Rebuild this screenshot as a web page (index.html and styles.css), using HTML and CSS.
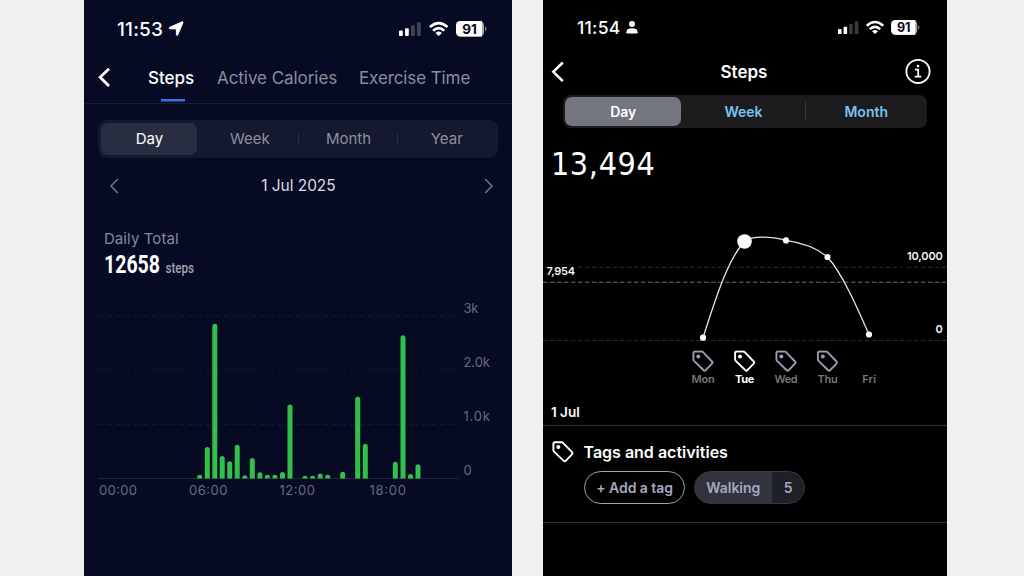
FILE: index.html
```
<!DOCTYPE html>
<html lang="en">
<head>
<meta charset="utf-8">
<title>Steps comparison</title>
<link rel="stylesheet" href="styles.css">
</head>
<body>
<svg class="defs" width="0" height="0">
  <symbol id="status" viewBox="0 0 88 18">
    <rect x="0" y="9.6" width="3.8" height="5.4" rx="1" fill="#fff"/>
    <rect x="6" y="7.2" width="3.8" height="7.8" rx="1" fill="#fff"/>
    <rect x="12" y="4.2" width="3.8" height="10.8" rx="1" fill="#fff" opacity=".23"/>
    <rect x="18" y="1.2" width="3.8" height="13.8" rx="1" fill="#fff" opacity=".23"/>
    <g fill="none" stroke="#fff" stroke-width="2.7">
      <path d="M30.9 6.1Q39.7-2 48.5 6.1"/>
      <path d="M34.1 9.7Q39.7 4.7 45.3 9.7"/>
    </g>
    <path d="M36.5 12Q39.7 9.2 42.9 12L39.7 15Z" fill="#fff"/>
    <rect x="57" y="0" width="28" height="15.6" rx="4.6" fill="#a6a8ad"/>
    <path d="M61.6 0H83V15.6H61.6A4.6 4.6 0 0 1 57 11V4.6A4.6 4.6 0 0 1 61.6 0Z" fill="#fff"/>
    <path d="M86 5.2Q89 7.8 86 10.4Z" fill="#85878d"/>
    <text class="battery" x="70.5" y="12.9" text-anchor="middle">91</text>
  </symbol>
  <symbol id="tag" viewBox="0 0 22 22">
    <path d="M1.4 2.7Q1.4 1.2 2.9 1.2H9.6Q10.4 1.2 11 1.8L20 11.2Q21 12.3 20 13.3L13.7 19.9Q12.7 20.8 11.7 19.9L2 10.6Q1.4 10 1.4 9.2Z" fill="none" stroke="currentColor" stroke-width="1.9" stroke-linejoin="round"/>
    <circle cx="6.3" cy="6.1" r="2" fill="currentColor"/>
  </symbol>
</svg>

<main class="stage">
  <section class="phone navy">
    <header class="status">
      <span class="time">11:53</span>
      <svg class="arrow" width="16" height="16" viewBox="0 0 16 16"><path d="M14.2.8Q15.4.4 14.9 1.8L9.8 13.8Q8.9 15.4 8.4 13.7V8.8Q8.2 7.8 7.2 7.8H2Q.3 7.3 1.7 6.3Z" fill="#fff" stroke="#fff" stroke-width="1"/></svg>
      <svg class="icons" width="88" height="18"><use href="#status"/></svg>
    </header>
    <nav class="tabs">
      <svg class="back" width="13" height="21" viewBox="0 0 13 21"><path d="M11 1.7 2.2 10.3 11 18.9" fill="none" stroke="#fff" stroke-width="2.8"/></svg>
      <span class="tab current">Steps</span>
      <span class="tab calories">Active Calories</span>
      <span class="tab exercise">Exercise Time</span>
    </nav>
    <div class="segments">
      <span class="segment chosen">Day</span>
      <span class="segment week">Week</span>
      <span class="segment ruled">Month</span>
      <span class="segment ruled">Year</span>
    </div>
    <div class="date-row">
      <svg width="9" height="16" viewBox="0 0 9 16"><path d="M7.8 1 1 8 7.8 15" fill="none" stroke="#777986" stroke-width="1.5"/></svg>
      <span>1 Jul 2025</span>
      <svg width="9" height="16" viewBox="0 0 9 16"><path d="M1.2 1 8 8 1.2 15" fill="none" stroke="#777986" stroke-width="1.5"/></svg>
    </div>
    <div class="total-label">Daily Total</div>
    <svg class="total" width="120" height="30" viewBox="104 250 120 30">
      <text class="total-number" x="104" y="273" textLength="56" lengthAdjust="spacingAndGlyphs">12658</text>
      <text class="total-unit" x="165.5" y="273" textLength="28.5" lengthAdjust="spacingAndGlyphs">steps</text>
    </svg>
    <svg class="bar-chart" width="428" height="216" viewBox="84 290 428 216">
      <path class="grid" d="M98 315.7H459M98 370H459M98 424.4H459"/>
      <path class="axis" d="M98 478.4H459"/>
      <path class="bars" d="M197.2 478.4V476.8q0-2 2.5-2t2.5 2V478.4ZM204.8 478.4V449.5q0-2.5 2.5-2.5t2.5 2.5V478.4ZM212.3 478.4V326.2q0-2.5 2.5-2.5t2.5 2.5V478.4ZM219.7 478.4V458.5q0-2.5 2.5-2.5t2.5 2.5V478.4ZM227.2 478.4V463.8q0-2.5 2.5-2.5t2.5 2.5V478.4ZM234.7 478.4V447.2q0-2.5 2.5-2.5t2.5 2.5V478.4ZM242.3 478.4V477.3q0-2 2.5-2t2.5 2V478.4ZM249.8 478.4V460.4q0-2.5 2.5-2.5t2.5 2.5V478.4ZM257.4 478.4V474.7q0-2.5 2.5-2.5t2.5 2.5V478.4ZM264.9 478.4V476.7q0-2 2.5-2t2.5 2V478.4ZM272.4 478.4V476.7q0-2 2.5-2t2.5 2V478.4ZM280 478.4V474.5q0-2.5 2.5-2.5t2.5 2.5V478.4ZM287.5 478.4V407q0-2.5 2.5-2.5t2.5 2.5V478.4ZM302.5 478.4V477.8q0-2 2.5-2t2.5 2V478.4ZM310 478.4V477.8q0-2 2.5-2t2.5 2V478.4ZM317.7 478.4V476q0-2.5 2.5-2.5t2.5 2.5V478.4ZM325.2 478.4V476.8q0-2 2.5-2t2.5 2V478.4ZM340.2 478.4V474.3q0-2.5 2.5-2.5t2.5 2.5V478.4ZM355.2 478.4V399.3q0-2.5 2.5-2.5t2.5 2.5V478.4ZM362.8 478.4V446.2q0-2.5 2.5-2.5t2.5 2.5V478.4ZM392.8 478.4V464.3q0-2.5 2.5-2.5t2.5 2.5V478.4ZM400.5 478.4V337.7q0-2.5 2.5-2.5t2.5 2.5V478.4ZM408 478.4V476q0-2 2.5-2t2.5 2V478.4ZM415.5 478.4V466.8q0-2.5 2.5-2.5t2.5 2.5V478.4Z"/>
      <g class="axis-text">
        <text x="463.5" y="312.6" textLength="15">3k</text>
        <text x="463.5" y="366.9" textLength="26.5">2.0k</text>
        <text x="463.5" y="421.2" textLength="26.5">1.0k</text>
        <text x="463.5" y="475.4">0</text>
        <text x="99" y="495.3" textLength="38">00:00</text>
        <text x="189" y="495.3" textLength="38.5">06:00</text>
        <text x="279.5" y="495.3" textLength="35.5">12:00</text>
        <text x="369.5" y="495.3" textLength="36.5">18:00</text>
      </g>
    </svg>
  </section>

  <section class="phone black">
    <header class="status">
      <span class="time">11:54</span>
      <svg class="person" width="12" height="13" viewBox="0 0 12 13"><circle cx="6" cy="3" r="3" fill="#fff"/><path d="M.3 11.2Q.3 7.2 6 7.2T11.7 11.2Q11.7 12.4 10.5 12.4H1.5Q.3 12.4.3 11.2Z" fill="#fff"/></svg>
      <svg class="icons" width="82" height="17"><use href="#status"/></svg>
    </header>
    <div class="title-bar">
      <svg width="14" height="22" viewBox="0 0 14 22"><path d="M11.8 1.5 2.3 10.8 11.8 20.1" fill="none" stroke="#fff" stroke-width="2.5"/></svg>
      <h1>Steps</h1>
      <svg width="26" height="26" viewBox="0 0 26 26"><circle cx="13" cy="12.4" r="11.6" fill="none" stroke="#fff" stroke-width="1.8"/><circle cx="13" cy="7.1" r="1.3" fill="#fff"/><path d="M10 10.7H13.2V17.5M9.7 17.7H16.3" fill="none" stroke="#fff" stroke-width="1.8"/></svg>
    </div>
    <div class="segments">
      <span class="segment chosen">Day</span>
      <span class="segment week">Week</span>
      <span class="segment ruled">Month</span>
    </div>
    <svg class="count" width="404" height="60" viewBox="0 0 404 60">
      <text x="8.8" y="35.3" textLength="115.5" transform="scale(.9 1)">13,494</text>
    </svg>
    <svg class="line-chart" width="404" height="200" viewBox="543 200 404 200">
      <path class="dash" d="M543 267.2H902M907 267.2H946M543 340.5H946"/>
      <path class="dash average" d="M543 282.2H946"/>
      <rect x="543" y="264" width="34" height="16" fill="#000"/>
      <path class="curve" d="M703 337.7C714 304 727 260 744.5 241.5C753 235 772 237 786 240.3C801 242.5 817 248 827.5 257C842 273 857 307 869 334.5"/>
      <g fill="#fff"><circle cx="703" cy="337.7" r="3.1"/><circle cx="744.5" cy="241.5" r="7.3"/><circle cx="786" cy="240.4" r="3.1"/><circle cx="827.5" cy="257" r="3.1"/><circle cx="869" cy="334.5" r="3.1"/></g>
      <g class="scale">
        <text x="546.5" y="275.4" textLength="28.5">7,954</text>
        <text x="907" y="260" textLength="35.8">10,000</text>
        <text x="935.5" y="333.4">0</text>
      </g>
      <g color="#9c9db3">
        <use href="#tag" x="692" y="350.3" width="22" height="22"/>
        <use href="#tag" x="775" y="350.3" width="22" height="22"/>
        <use href="#tag" x="816.5" y="350.3" width="22" height="22"/>
      </g>
      <use href="#tag" x="733.7" y="350.3" width="22" height="22" color="#fff"/>
      <g class="days">
        <text x="691.5" y="383.3" textLength="23.2">Mon</text>
        <text class="today" x="735" y="383.3" textLength="19.2">Tue</text>
        <text x="774.5" y="383.3" textLength="23.2">Wed</text>
        <text x="817.5" y="383.3" textLength="20.2">Thu</text>
        <text x="862.3" y="383.3" textLength="13.8">Fri</text>
      </g>
    </svg>
    <div class="day-heading">1 Jul</div>
    <div class="activities">
      <svg width="22" height="22"><use href="#tag"/></svg>
      <div class="activity-body">
        <h2>Tags and activities</h2>
        <div class="pills">
          <span class="pill add">+ Add a tag</span>
          <span class="pill walking"><span class="name">Walking</span><span class="number">5</span></span>
        </div>
      </div>
    </div>
  </section>
</main>
</body>
</html>
```
FILE: styles.css
```
* { box-sizing: border-box; }
body { margin: 0; background: #edf0ef; font-family: Inter, "Liberation Sans", sans-serif; color: #fff; }
.defs { display: block; }
svg { display: block; flex: none; }
h1, h2 { margin: 0; }
.stage { display: flex; gap: 31px; padding-left: 84.4px; height: 576px; overflow: hidden; white-space: nowrap; }
.phone { display: flex; flex-direction: column; flex: none; height: 576px; }
.navy { width: 427.6px; background: #060b23; }
.black { width: 404px; background: #000; }
.battery { font: 700 13.5px Inter, sans-serif; fill: #080b1c; }

.status { display: flex; align-items: center; }
.status .icons { margin-left: auto; }
.navy .status { height: 58px; padding: 0 25px 0 32.6px; }
.navy .time { font-size: 19px; font-weight: 500; letter-spacing: .2px; }
.navy .arrow { margin-left: 5px; }
.navy .icons { margin-top: 1px; }
.black .status { height: 54px; padding: 0 26.5px 0 34px; }
.black .time { font-size: 17.5px; font-weight: 500; letter-spacing: .3px; }
.black .person { margin-left: 5px; }
.black .icons { margin-top: 2px; }

.tabs { display: flex; align-items: center; height: 46px; padding-left: 13.6px; border-bottom: 1px solid #181c34; font-size: 17px; color: #8b8d9d; }
.tabs .back { margin-bottom: 7px; }
.tab { display: flex; height: 45px; padding-top: 9.5px; }
.tab.current { margin-left: 37px; width: 47px; color: #fff; font-weight: 500; background: linear-gradient(#3f6fe0, #3f6fe0) 13px 41px / 24px 2.5px no-repeat; }
.tab.calories { margin-left: 22px; width: 120px; letter-spacing: -.05px; }
.tab.exercise { margin-left: 22px; letter-spacing: -.1px; }

.segments { display: flex; }
.segment { flex: 1; display: flex; align-items: center; justify-content: center; }
.navy .segments { margin: 15.5px 14px 0; height: 38px; padding: 3px; border-radius: 9px; background: #15192f; color: #8e909e; font-size: 15px; }
.navy .segment { border-radius: 7px; }
.navy .chosen { background: #292d42; color: #fff; flex: 0 0 96px; margin-right: 2px; }
.navy .week { flex: 0 0 99px; padding-left: 2px; }
.navy .ruled { background: linear-gradient(#2b2e43, #2b2e43) 0 50% / 1px 12px no-repeat; padding-left: 2px; }
.date-row { display: flex; justify-content: space-between; align-items: center; height: 56px; padding: 0 19px 0 25.5px; font-size: 15.5px; letter-spacing: -.05px; color: #dcdde4; }
.date-row span { padding-right: 6px; }
.total-label { height: 36px; padding: 15px 0 0 19.5px; font-size: 15px; line-height: 20px; letter-spacing: .1px; color: #85889a; }
.total { margin-left: 19.5px; }
.total-number { font: 700 26.5px Roboto, sans-serif; fill: #fff; }
.total-unit { font: 500 14.5px Roboto, sans-serif; fill: #a0a2b0; }
.bar-chart { margin-top: 10px; }
.grid { stroke: #151a30; stroke-dasharray: 5 4; }
.axis { stroke: #23283f; }
.bars { fill: #32c04b; }
.axis-text { font: 400 13px Inter, sans-serif; fill: #696c7c; }

.title-bar { display: flex; align-items: center; justify-content: space-between; height: 35px; padding: 0 16px 0 8px; }
.title-bar h1 { padding-left: 18px; font-size: 17px; font-weight: 600; letter-spacing: 0; }
.black .segments { margin: 5.5px 20px 0; height: 33px; padding: 2px; border-radius: 8px; background: #1c1c1f; color: #77c4ef; font-size: 14px; font-weight: 600; }
.black .chosen { flex: 0 0 116.5px; border-radius: 7px; background: #74767f; color: #fff; }
.black .week { flex: 0 0 124px; }
.black .ruled { background: linear-gradient(#39393d, #39393d) 0 50% / 1px 19px no-repeat; padding-left: 2px; }
.count { margin-top: 12.5px; }
.count text { font: 400 32px "DejaVu Sans", sans-serif; fill: #fff; }
.dash { fill: none; stroke: #2c2c2c; stroke-dasharray: 4.5 2.5; }
.average { stroke: #6c6c6c; }
.curve { fill: none; stroke: #e6e6e6; stroke-width: 1.3; }
.scale { font: 600 11px Inter, sans-serif; fill: #f4f4f4; }
.days { font: 600 11px Inter, sans-serif; fill: #777; }
.today { fill: #fff; font-weight: 700; }
.day-heading { height: 25.5px; padding: 3px 0 0 8px; border-bottom: 1px solid #303030; font-size: 13.5px; line-height: 18px; font-weight: 600; }
.activities { display: flex; gap: 9.5px; height: 97px; padding: 15.5px 0 0 9px; border-bottom: 1px solid #303030; }
.activity-body h2 { font-size: 16px; line-height: 22px; font-weight: 600; }
.pills { display: flex; gap: 8.5px; margin: 7.5px 0 0 .5px; }
.pill { display: flex; align-items: center; justify-content: center; height: 33.5px; border-radius: 17px; overflow: hidden; color: #a5a8ba; font-size: 14px; font-weight: 600; letter-spacing: -.05px; }
.add { width: 101.3px; border: 1px solid #a2a3ad; }
.walking { width: 111.7px; align-items: stretch; background: #1f2025; border: 1px solid #373941; }
.walking span { display: flex; align-items: center; justify-content: center; }
.walking .name { width: 77px; background: #31333e; }
.walking .number { flex: 1; }
```
